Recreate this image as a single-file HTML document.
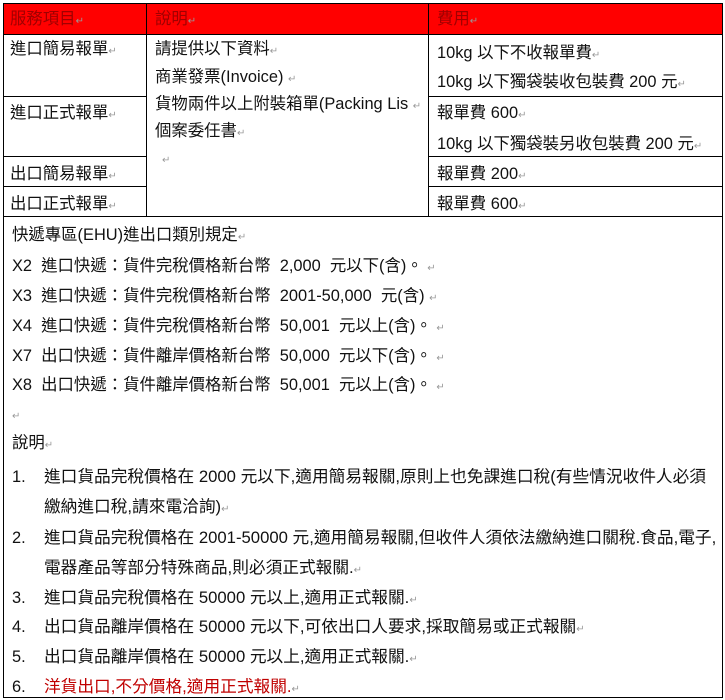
<!DOCTYPE html>
<html><head><meta charset="utf-8"><style>
html,body{margin:0;padding:0;background:#fff;width:725px;height:700px;overflow:hidden}
body{position:relative;font-family:"Liberation Sans","Noto Sans CJK TC",sans-serif;color:#111}
.t{position:absolute;white-space:nowrap;font-size:16.4px;line-height:20px}
.h{position:absolute;background:#000}
.r{color:#999;font-size:10px}
.hd{color:#a00000}
.red{color:#c00000}
.l{font-size:16.7px}
</style></head><body>
<div style="position:absolute;left:3px;top:3px;width:719px;height:31px;background:#ff0000"></div>
<div class="h" style="left:3px;top:3px;width:720px;height:1px"></div>
<div class="h" style="left:3px;top:34px;width:720px;height:1px"></div>
<div class="h" style="left:3px;top:96px;width:143px;height:1px"></div>
<div class="h" style="left:428px;top:96px;width:295px;height:1px"></div>
<div class="h" style="left:3px;top:156px;width:143px;height:1px"></div>
<div class="h" style="left:428px;top:156px;width:295px;height:1px"></div>
<div class="h" style="left:3px;top:186px;width:143px;height:1px"></div>
<div class="h" style="left:428px;top:186px;width:295px;height:1px"></div>
<div class="h" style="left:3px;top:216px;width:720px;height:1px"></div>
<div class="h" style="left:3px;top:697px;width:720px;height:1px"></div>
<div class="h" style="left:3px;top:3px;width:1px;height:695px"></div>
<div class="h" style="left:722px;top:3px;width:1px;height:695px"></div>
<div class="h" style="left:146px;top:3px;width:1px;height:214px"></div>
<div class="h" style="left:428px;top:3px;width:1px;height:214px"></div>

<div class="t hd" style="left:10px;top:9px">服務項目<span class="r">↵</span></div>
<div class="t hd" style="left:155px;top:9px">說明<span class="r">↵</span></div>
<div class="t hd" style="left:437px;top:9px">費用<span class="r">↵</span></div>

<div class="t" style="left:10px;top:39px">進口簡易報單<span class="r">↵</span></div>
<div class="t" style="left:10px;top:103px">進口正式報單<span class="r">↵</span></div>
<div class="t" style="left:10px;top:164px">出口簡易報單<span class="r">↵</span></div>
<div class="t" style="left:10px;top:194px">出口正式報單<span class="r">↵</span></div>

<div class="t" style="left:155px;top:39px">請提供以下資料<span class="r">↵</span></div>
<div class="t" style="left:155px;top:67px">商業發票(Invoice) <span class="r">↵</span></div>
<div class="t" style="left:155px;top:94px">貨物兩件以上附裝箱單(Packing Lis <span class="r">↵</span></div>
<div class="t" style="left:155px;top:121px">個案委任書<span class="r">↵</span></div>
<div class="t" style="left:162px;top:148px"><span class="r">↵</span></div>

<div class="t" style="left:437px;top:43px">10kg 以下不收報單費<span class="r">↵</span></div>
<div class="t" style="left:437px;top:72px">10kg 以下獨袋裝收包裝費 200 元<span class="r">↵</span></div>
<div class="t" style="left:437px;top:103px">報單費 600<span class="r">↵</span></div>
<div class="t" style="left:437px;top:134px">10kg 以下獨袋裝另收包裝費 200 元<span class="r">↵</span></div>
<div class="t" style="left:437px;top:164px">報單費 200<span class="r">↵</span></div>
<div class="t" style="left:437px;top:194px">報單費 600<span class="r">↵</span></div>

<div class="t" style="left:12px;top:225px">快遞專區(EHU)進出口類別規定<span class="r">↵</span></div>
<div class="t" style="left:12px;top:256px">X2&nbsp; 進口快遞：貨件完稅價格新台幣&nbsp; 2,000&nbsp; 元以下(含)。 <span class="r">↵</span></div>
<div class="t" style="left:12px;top:286px">X3&nbsp; 進口快遞：貨件完稅價格新台幣&nbsp; 2001-50,000&nbsp; 元(含) <span class="r">↵</span></div>
<div class="t" style="left:12px;top:316px">X4&nbsp; 進口快遞：貨件完稅價格新台幣&nbsp; 50,001&nbsp; 元以上(含)。 <span class="r">↵</span></div>
<div class="t" style="left:12px;top:346px">X7&nbsp; 出口快遞：貨件離岸價格新台幣&nbsp; 50,000&nbsp; 元以下(含)。 <span class="r">↵</span></div>
<div class="t" style="left:12px;top:375px">X8&nbsp; 出口快遞：貨件離岸價格新台幣&nbsp; 50,001&nbsp; 元以上(含)。 <span class="r">↵</span></div>
<div class="t" style="left:12px;top:404px"><span class="r">↵</span></div>
<div class="t" style="left:12px;top:433px">說明<span class="r">↵</span></div>

<div class="t" style="left:12px;top:467px">1.</div>
<div class="t l" style="left:44px;top:467px">進口貨品完稅價格在 2000 元以下,適用簡易報關,原則上也免課進口稅(有些情況收件人必須</div>
<div class="t l" style="left:44px;top:497px">繳納進口稅,請來電洽詢)<span class="r">↵</span></div>
<div class="t" style="left:12px;top:528px">2.</div>
<div class="t l" style="left:44px;top:528px">進口貨品完稅價格在 2001-50000 元,適用簡易報關,但收件人須依法繳納進口關稅.食品,電子,</div>
<div class="t l" style="left:44px;top:558px">電器產品等部分特殊商品,則必須正式報關.<span class="r">↵</span></div>
<div class="t" style="left:12px;top:588px">3.</div>
<div class="t l" style="left:44px;top:588px">進口貨品完稅價格在 50000 元以上,適用正式報關.<span class="r">↵</span></div>
<div class="t" style="left:12px;top:617px">4.</div>
<div class="t l" style="left:44px;top:617px">出口貨品離岸價格在 50000 元以下,可依出口人要求,採取簡易或正式報關<span class="r">↵</span></div>
<div class="t" style="left:12px;top:647px">5.</div>
<div class="t l" style="left:44px;top:647px">出口貨品離岸價格在 50000 元以上,適用正式報關.<span class="r">↵</span></div>
<div class="t" style="left:12px;top:677px">6.</div>
<div class="t l red" style="left:44px;top:677px">洋貨出口,不分價格,適用正式報關.<span class="r">↵</span></div>
</body></html>
